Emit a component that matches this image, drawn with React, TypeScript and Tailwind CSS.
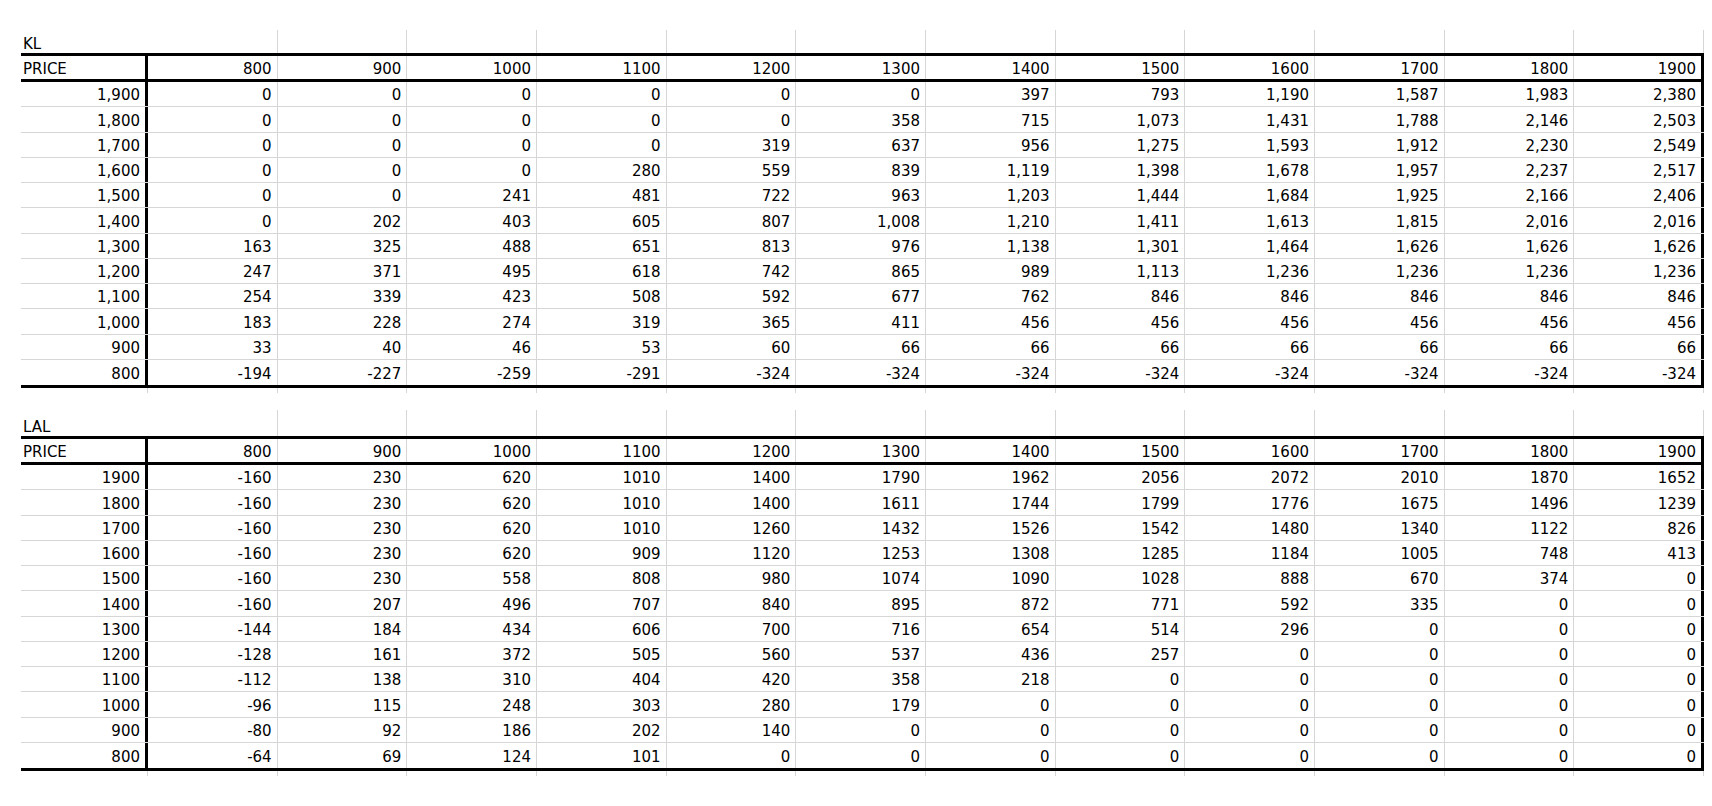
import React from 'react';

const cols = ['800', '900', '1000', '1100', '1200', '1300', '1400', '1500', '1600', '1700', '1800', '1900'];

const klRows: string[][] = [
  ['1,900', '0', '0', '0', '0', '0', '0', '397', '793', '1,190', '1,587', '1,983', '2,380'],
  ['1,800', '0', '0', '0', '0', '0', '358', '715', '1,073', '1,431', '1,788', '2,146', '2,503'],
  ['1,700', '0', '0', '0', '0', '319', '637', '956', '1,275', '1,593', '1,912', '2,230', '2,549'],
  ['1,600', '0', '0', '0', '280', '559', '839', '1,119', '1,398', '1,678', '1,957', '2,237', '2,517'],
  ['1,500', '0', '0', '241', '481', '722', '963', '1,203', '1,444', '1,684', '1,925', '2,166', '2,406'],
  ['1,400', '0', '202', '403', '605', '807', '1,008', '1,210', '1,411', '1,613', '1,815', '2,016', '2,016'],
  ['1,300', '163', '325', '488', '651', '813', '976', '1,138', '1,301', '1,464', '1,626', '1,626', '1,626'],
  ['1,200', '247', '371', '495', '618', '742', '865', '989', '1,113', '1,236', '1,236', '1,236', '1,236'],
  ['1,100', '254', '339', '423', '508', '592', '677', '762', '846', '846', '846', '846', '846'],
  ['1,000', '183', '228', '274', '319', '365', '411', '456', '456', '456', '456', '456', '456'],
  ['900', '33', '40', '46', '53', '60', '66', '66', '66', '66', '66', '66', '66'],
  ['800', '-194', '-227', '-259', '-291', '-324', '-324', '-324', '-324', '-324', '-324', '-324', '-324'],
];

const lalRows: string[][] = [
  ['1900', '-160', '230', '620', '1010', '1400', '1790', '1962', '2056', '2072', '2010', '1870', '1652'],
  ['1800', '-160', '230', '620', '1010', '1400', '1611', '1744', '1799', '1776', '1675', '1496', '1239'],
  ['1700', '-160', '230', '620', '1010', '1260', '1432', '1526', '1542', '1480', '1340', '1122', '826'],
  ['1600', '-160', '230', '620', '909', '1120', '1253', '1308', '1285', '1184', '1005', '748', '413'],
  ['1500', '-160', '230', '558', '808', '980', '1074', '1090', '1028', '888', '670', '374', '0'],
  ['1400', '-160', '207', '496', '707', '840', '895', '872', '771', '592', '335', '0', '0'],
  ['1300', '-144', '184', '434', '606', '700', '716', '654', '514', '296', '0', '0', '0'],
  ['1200', '-128', '161', '372', '505', '560', '537', '436', '257', '0', '0', '0', '0'],
  ['1100', '-112', '138', '310', '404', '420', '358', '218', '0', '0', '0', '0', '0'],
  ['1000', '-96', '115', '248', '303', '280', '179', '0', '0', '0', '0', '0', '0'],
  ['900', '-80', '92', '186', '202', '140', '0', '0', '0', '0', '0', '0', '0'],
  ['800', '-64', '69', '124', '101', '0', '0', '0', '0', '0', '0', '0', '0'],
];

const gridCols = 'grid grid-cols-[127px_repeat(12,minmax(0,1fr))]';

// right edge of a cell: thick black after the label column and at the far right, grey gridline elsewhere
const edge = (i: number) =>
  i === 0 || i === 12 ? 'border-r-[3px] border-r-black' : 'border-r border-r-[#d6d6d6]';

interface SheetProps {
  title: string;
  rows: string[][];
  titleHeight: string;
}

const Sheet: React.FC<SheetProps> = ({ title, rows, titleHeight }) => {
  return (
    <div>
      {/* title row, only grey gridlines */}
      <div className={`${gridCols} ${titleHeight}`}>
        {Array.from({ length: 13 }).map((_, i) => (
          <div
            key={i}
            className={`flex items-end pl-[2px] ${i === 0 ? '' : 'border-r border-r-[#d6d6d6]'}`}
          >
            {i === 0 ? title : ''}
          </div>
        ))}
      </div>

      <div className="border-y-[3px] border-black">
        {/* header row */}
        <div className={`${gridCols} h-[26px] border-b-[3px] border-black`}>
          <div className={`flex items-end pl-[2px] pb-[1px] ${edge(0)}`}>PRICE</div>
          {cols.map((c, i) => (
            <div key={c} className={`flex items-end justify-end pr-[5px] pb-[1px] ${edge(i + 1)}`}>
              {c}
            </div>
          ))}
        </div>

        {rows.map((row, r) => (
          <div
            key={r}
            className={`${gridCols} h-[25.25px] ${r < rows.length - 1 ? 'border-b border-b-[#d6d6d6]' : ''}`}
          >
            {row.map((v, i) => (
              <div key={i} className={`flex items-end justify-end pr-[5px] pb-[2px] ${edge(i)}`}>
                {v}
              </div>
            ))}
          </div>
        ))}
      </div>

      {/* gridline stubs under the table */}
      <div className={`${gridCols} h-[5px]`}>
        {Array.from({ length: 13 }).map((_, i) => (
          <div key={i} className="border-r border-r-[#d6d6d6]" />
        ))}
      </div>
    </div>
  );
};

export default function App() {
  return (
    <div className="w-[1712px] h-[806px] bg-white overflow-hidden font-['DejaVu_Sans',sans-serif] text-[15px] leading-[18px] text-black">
      <div className="ml-[21px] w-[1683px] pt-[30px] flex flex-col">
        <Sheet title="KL" rows={klRows} titleHeight="h-[23px]" />
        <div className="h-[17px]" />
        <Sheet title="LAL" rows={lalRows} titleHeight="h-[26px]" />
      </div>
    </div>
  );
}
